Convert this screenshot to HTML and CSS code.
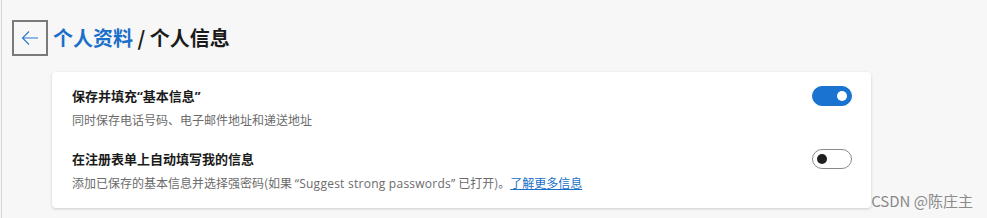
FILE: index.html
```html
<!DOCTYPE html>
<html lang="zh-CN">
	<head>
		<meta charset="UTF-8" />
		<title>个人信息</title>
		<link rel="stylesheet" href="styles.css">
	</head>
	<body>
		<div class="page">
			<div class="header">
				<button class="back-button" aria-label="返回">
					<svg width="18" height="16" viewBox="0 0 18 16">
						<path d="M17 8H1.5M8 1.5L1.5 8L8 14.5" fill="none" stroke="#2a78cf" stroke-width="1.1" />
					</svg>
				</button>
				<h1 class="title"><span class="crumb">个人资料</span> / 个人信息</h1>
			</div>

			<div class="card">
				<div class="setting">
					<div class="setting-text">
						<div class="setting-title">保存并填充<span class="quote">“</span>基本信息<span class="quote">”</span></div>
						<div class="setting-desc">同时保存电话号码、电子邮件地址和递送地址</div>
					</div>
					<div class="toggle on"><span class="knob"></span></div>
				</div>
				<div class="setting">
					<div class="setting-text">
						<div class="setting-title">在注册表单上自动填写我的信息</div>
						<div class="setting-desc">
							添加已保存的基本信息并选择强密码(如果 <span class="latin">“Suggest strong passwords”</span> 已打开)。<a href="#" class="link">了解更多信息</a>
						</div>
					</div>
					<div class="toggle"><span class="knob"></span></div>
				</div>
			</div>
		</div>
		<div class="watermark">CSDN @陈庄主</div>
	</body>
</html>
```

FILE: styles.css
```css
* {
	margin: 0;
	padding: 0;
	box-sizing: border-box;
}
body {
	font-family: "Microsoft YaHei", "Noto Sans CJK SC", "Liberation Sans", sans-serif;
	background-color: #f7f7f7;
	width: 987px;
	height: 218px;
	overflow: hidden;
	border-left: 1px solid #d6d6d6;
	margin-left: 1px;
	position: relative;
}
.page {
	padding: 20px 0 0 10px;
}
.header {
	display: flex;
	align-items: center;
	gap: 5px;
	height: 35px;
}
.back-button {
	width: 36px;
	height: 36px;
	border: 2px solid #7a7a7a;
	background-color: transparent;
	display: flex;
	justify-content: center;
	align-items: center;
}
.title {
	font-size: 20px;
	font-weight: bold;
	color: #1b1b1b;
	line-height: 26px;
}
.crumb {
	color: #1a6fc9;
}
.card {
	margin: 17px 0 0 40px;
	width: 819px;
	height: 136px;
	background-color: #fff;
	border-radius: 4px;
	box-shadow: 0 1px 3px rgba(0, 0, 0, 0.18);
	padding: 14px 19px 0 20px;
}
.setting {
	display: flex;
	justify-content: space-between;
	align-items: flex-start;
	height: 63px;
}
.setting-title {
	font-size: 13px;
	font-weight: bold;
	color: #1b1b1b;
	line-height: 20px;
}
.quote,
.latin {
	font-family: "Open Sans", "Liberation Sans", sans-serif;
}
.latin {
	letter-spacing: 0.25px;
}
.setting-desc {
	margin-top: 5px;
	font-size: 12px;
	color: #6b6b6b;
	line-height: 18px;
}
.link {
	color: #1a6fc9;
	text-decoration: underline;
}
.toggle {
	width: 40px;
	height: 20px;
	border-radius: 10px;
	border: 1px solid #8a8a8a;
	background-color: #fff;
	display: flex;
	align-items: center;
	padding: 0 4px;
	flex-shrink: 0;
}
.toggle .knob {
	width: 10px;
	height: 10px;
	border-radius: 50%;
	background-color: #1f1f1f;
}
.toggle.on {
	background-color: #1a73d0;
	border-color: #1a73d0;
	justify-content: flex-end;
}
.toggle.on .knob {
	background-color: #fff;
}
.watermark {
	position: absolute;
	right: 15px;
	bottom: 7px;
	font-size: 15px;
	color: #8a8a8a;
	font-family: "Noto Sans CJK SC", "Liberation Sans", sans-serif;
}
```
